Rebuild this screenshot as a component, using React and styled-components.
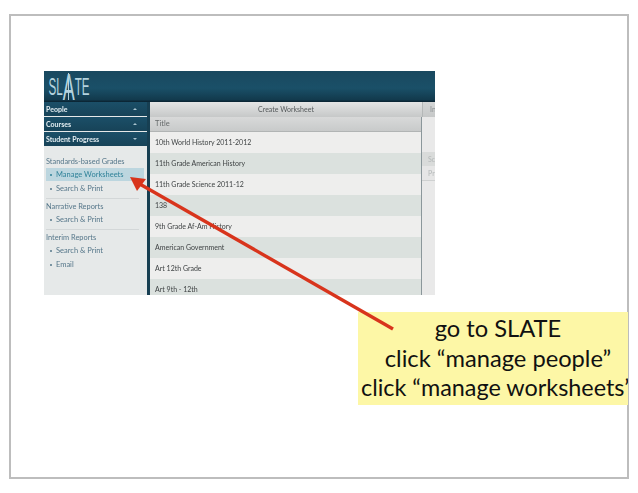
import React from 'react';
import styled, { createGlobalStyle } from 'styled-components';

const Global = createGlobalStyle`
  html, body {
    margin: 0;
    padding: 0;
    background: #fff;
  }
`;

const Page = styled.div`
  position: relative;
  width: 638px;
  height: 493px;
  overflow: hidden;
  background: #fff;
  font-family: "Lato", "Liberation Sans", sans-serif;
`;

const Slide = styled.div`
  box-sizing: border-box;
  position: absolute;
  left: 9px;
  top: 14px;
  width: 620px;
  height: 465px;
  border: 2px solid #bdbdbd;
  padding: 55px 0 0 33px;
  background: #fff;
`;

const Shot = styled.div`
  width: 391px;
  height: 224px;
  display: flex;
  flex-direction: column;
  overflow: hidden;
  filter: blur(0.3px);
  font-family: "Lato", "Liberation Sans", sans-serif;
`;

const Header = styled.div`
  height: 31px;
  flex: none;
  box-sizing: border-box;
  padding-left: 4px;
  background: linear-gradient(#19485f, #1a5068 55%, #123a4d 92%, #0a2230);
`;

const LogoMark = styled.svg`
  display: block;
  font-family: "Liberation Sans", sans-serif;
  fill: #b4d3de;
`;

const Body = styled.div`
  flex: 1;
  display: flex;
  min-height: 0;
`;

const Sidebar = styled.div`
  width: 103px;
  flex: none;
  display: flex;
  flex-direction: column;
  background: #e6e9e9;
`;

const NavRow = styled.div`
  height: 14px;
  margin-bottom: 1px;
  flex: none;
  display: flex;
  align-items: center;
  justify-content: space-between;
  padding: 0 10px 0 2px;
  background: linear-gradient(#1b4f68, #174358);
  color: #e4eef2;
  font-size: 7px;
  font-weight: 700;
`;

const Caret = styled.span`
  width: 0;
  height: 0;
  border-left: 2px solid transparent;
  border-right: 2px solid transparent;
  ${p => (p.$down ? 'border-top: 2px solid #a9c4cf;' : 'border-bottom: 2px solid #a9c4cf;')}
`;

const Menu = styled.div`
  flex: 1;
  padding: 8px 0 0 2px;
  display: flex;
  flex-direction: column;
`;

const GroupTitle = styled.div`
  height: 13px;
  line-height: 13px;
  font-size: 7.4px;
  color: #56778a;
  white-space: nowrap;
`;

const MenuItem = styled.div`
  height: 13px;
  display: flex;
  align-items: center;
  gap: 4px;
  margin: 0 3px 1px 0;
  padding-left: 4px;
  font-size: 7.5px;
  white-space: nowrap;
  color: ${p => (p.$active ? '#2f8299' : '#56778a')};
  background: ${p => (p.$active ? '#bcd6df' : 'transparent')};

  &::before {
    content: '';
    width: 2px;
    height: 2px;
    border-radius: 50%;
    background: currentColor;
  }
`;

const Rule = styled.div`
  height: 1px;
  margin: 2px 8px 1px 0;
  background: #d3d7d8;
`;

const Divider = styled.div`
  width: 3px;
  flex: none;
  background: #173f52;
`;

const Main = styled.div`
  flex: 1;
  min-width: 0;
  display: flex;
  flex-direction: column;
`;

const BarRow = styled.div`
  display: flex;
  flex: none;
`;

const CreateBar = styled.div`
  flex: 1;
  height: 15px;
  line-height: 15px;
  text-align: center;
  font-size: 7px;
  color: #55595b;
  background: linear-gradient(#e4e5e5, #c6c8c8);
`;

const SideTab = styled.div`
  width: 13px;
  height: 15px;
  line-height: 15px;
  padding-left: 7px;
  box-sizing: border-box;
  font-size: 7px;
  color: #8b9091;
  background: linear-gradient(#d4d6d6, #c6c8c8);
  border-left: 1px solid #b5b8b8;
`;

const Content = styled.div`
  flex: 1;
  display: flex;
  min-height: 0;
`;

const Table = styled.div`
  flex: 1;
  min-width: 0;
  display: flex;
  flex-direction: column;
  border-right: 1px solid #8b979b;
`;

const TitleRow = styled.div`
  height: 15px;
  flex: none;
  box-sizing: border-box;
  line-height: 14px;
  padding-left: 5px;
  font-size: 7.5px;
  color: #676b6c;
  background: linear-gradient(#d8d9d9, #c8caca);
  border-bottom: 1px solid #b1b4b4;
`;

const Row = styled.div`
  height: 21px;
  flex: none;
  line-height: 21px;
  padding-left: 5px;
  font-size: 7px;
  color: #3f4344;
  white-space: nowrap;
  background: ${p => (p.$alt ? '#dbe1de' : '#eeeeed')};
`;

const Panel = styled.div`
  width: 13px;
  flex: none;
  display: flex;
  flex-direction: column;
  background: #e9e9e9;
`;

const PanelGap = styled.div`
  height: 35px;
  flex: none;
`;

const PanelRow = styled.div`
  height: 14px;
  flex: none;
  line-height: 14px;
  padding-left: 6px;
  font-size: 7px;
  color: #b4b8b8;
  background: ${p => (p.$alt ? '#d9dbda' : '#e6e6e6')};
  border-bottom: ${p => (p.$alt ? 'none' : '1px solid #cfd1d1')};
`;

const Arrow = styled.svg`
  position: absolute;
  left: 0;
  top: 0;
  pointer-events: none;
`;

const Callout = styled.div`
  position: absolute;
  left: 358px;
  top: 312px;
  width: 270px;
  height: 93px;
  box-sizing: border-box;
  padding-top: 2px;
  overflow: hidden;
  background: #fdf7a6;
  color: #111;
  font-size: 23.7px;
  line-height: 29.5px;
  text-align: center;
  white-space: nowrap;
`;

const Line = styled.div`
  display: flex;
  justify-content: ${p => (p.$left ? 'flex-start' : 'center')};
  padding-left: ${p => (p.$left ? '3px' : '10px')};
  font-size: ${p => (p.$left ? '23.4px' : 'inherit')};
`;

const rows = [
  '10th World History 2011-2012',
  '11th Grade American History',
  '11th Grade Science 2011-12',
  '138',
  '9th Grade Af-Am History',
  'American Government',
  'Art 12th Grade',
  'Art 9th - 12th',
];

const SlateLogo = () => (
  <LogoMark width="44" height="31" viewBox="0 0 44 31">
    <text x="0.5" y="24" fontSize="24" textLength="41" lengthAdjust="spacingAndGlyphs">
      SL<tspan fontSize="37" dy="5">A</tspan><tspan dy="-5">TE</tspan>
    </text>
    <rect x="20" y="2" width="1" height="27" />
  </LogoMark>
);

export default function App() {
  return (
    <Page>
      <Global />
      <Slide>
        <Shot>
          <Header>
            <SlateLogo />
          </Header>
          <Body>
            <Sidebar>
              <NavRow>People<Caret /></NavRow>
              <NavRow>Courses<Caret /></NavRow>
              <NavRow>Student Progress<Caret $down /></NavRow>
              <Menu>
                <GroupTitle>Standards-based Grades</GroupTitle>
                <MenuItem $active>Manage Worksheets</MenuItem>
                <MenuItem>Search &amp; Print</MenuItem>
                <Rule />
                <GroupTitle>Narrative Reports</GroupTitle>
                <MenuItem>Search &amp; Print</MenuItem>
                <Rule />
                <GroupTitle>Interim Reports</GroupTitle>
                <MenuItem>Search &amp; Print</MenuItem>
                <MenuItem>Email</MenuItem>
              </Menu>
            </Sidebar>
            <Divider />
            <Main>
              <BarRow>
                <CreateBar>Create Worksheet</CreateBar>
                <SideTab>In</SideTab>
              </BarRow>
              <Content>
                <Table>
                  <TitleRow>Title</TitleRow>
                  {rows.map((r, i) => (
                    <Row key={r} $alt={i % 2 === 1}>{r}</Row>
                  ))}
                </Table>
                <Panel>
                  <PanelGap />
                  <PanelRow $alt>Sc</PanelRow>
                  <PanelRow>Pr</PanelRow>
                </Panel>
              </Content>
            </Main>
          </Body>
        </Shot>
      </Slide>
      <Callout>
        <Line>go to SLATE</Line>
        <Line>click “manage people”</Line>
        <Line $left>click “manage worksheets”</Line>
      </Callout>
      <Arrow width="638" height="493" viewBox="0 0 638 493">
        <line x1="393" y1="329" x2="138" y2="183" stroke="#d8341c" strokeWidth="3.4" />
        <polygon points="130,177 146,179 137,191" fill="#d8341c" />
      </Arrow>
    </Page>
  );
}
